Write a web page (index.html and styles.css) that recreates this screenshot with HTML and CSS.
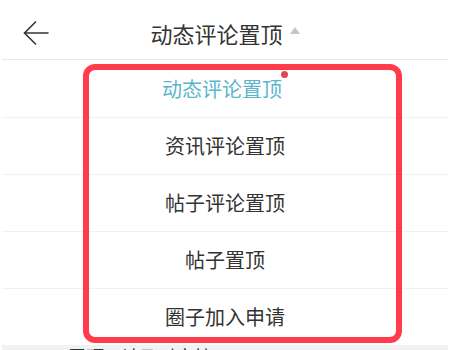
FILE: index.html
```html
<!DOCTYPE html>
<html lang="zh">
<head>
<meta charset="utf-8">
<link rel="stylesheet" href="styles.css">
</head>
<body>
<div class="page">
  <header class="topbar">
    <div class="topbar-left">
      <span class="back">
        <svg width="26" height="24" viewBox="0 0 26 24" fill="none" stroke="#333" stroke-width="1.6" stroke-linecap="round" stroke-linejoin="round">
          <path d="M1.5 12H25"/>
          <path d="M12.5 1L1.5 12L12.5 23"/>
        </svg>
      </span>
    </div>
    <div class="title">动态评论置顶<span class="caret"></span></div>
    <div></div>
  </header>
  <ul class="rows">
    <li></li>
    <li></li>
    <li></li>
    <li></li>
    <li></li>
  </ul>
  <div class="notice">置顶，请及时审核</div>

  <ul class="dropdown">
    <li class="active">动态评论置顶</li>
    <li>资讯评论置顶</li>
    <li>帖子评论置顶</li>
    <li>帖子置顶</li>
    <li>圈子加入申请</li>
  </ul>

  <div class="highlight-frame"><span class="dot"></span></div>
</div>
</body>
</html>
```
FILE: styles.css
```css
html, body {
  margin: 0;
  padding: 0;
  background: #ffffff;
}
body {
  font-family: "Noto Sans CJK SC", "Noto Sans", sans-serif;
  color: #333333;
  height: 350px;
  overflow: hidden;
}
.page {
  position: relative;
  width: 448px;
  height: 350px;
  padding-left: 2px;
  box-sizing: border-box;
  overflow: hidden;
}
.topbar {
  display: grid;
  grid-template-columns: 1fr auto 1fr;
  align-items: center;
  height: 60px;
  padding-top: 6px;
  box-sizing: border-box;
  border-bottom: 1px solid #e9e9e9;
}
.topbar-left {
  display: flex;
  align-items: center;
  padding-left: 21px;
}
.back {
  display: block;
  width: 26px;
  height: 24px;
}
.back svg {
  display: block;
}
.title {
  display: flex;
  align-items: center;
  font-size: 22px;
  line-height: 28px;
  color: #333333;
}
.caret {
  width: 0;
  height: 0;
  margin-left: 7px;
  margin-top: -4px;
  border-left: 5px solid transparent;
  border-right: 5px solid transparent;
  border-bottom: 7px solid #c6c6c6;
}
.rows {
  list-style: none;
  margin: 0;
  padding: 0;
}
.rows li {
  height: 56px;
  border-bottom: 1px solid #f1f1f1;
}
.notice {
  background: #f2f2f2;
  padding-left: 66px;
  font-size: 18px;
  line-height: 22px;
  color: #333333;
  height: 30px;
}
.dropdown {
  position: absolute;
  left: 2px;
  right: 0;
  top: 61px;
  list-style: none;
  margin: 0;
  padding: 0;
  background: #ffffff;
}
.dropdown li {
  height: 56px;
  line-height: 56px;
  border-bottom: 1px solid #f1f1f1;
  text-align: center;
  font-size: 20px;
  color: #333333;
}
.dropdown li.active {
  color: #5ab5cd;
  padding-right: 6px;
}
.highlight-frame {
  position: absolute;
  left: 83px;
  top: 64px;
  width: 319px;
  height: 279px;
  box-sizing: border-box;
  border: 6px solid #ff3b4c;
  border-radius: 12px;
}
.dot {
  position: absolute;
  left: 192px;
  top: 1px;
  width: 7px;
  height: 7px;
  border-radius: 50%;
  background: #ea4449;
}
```
